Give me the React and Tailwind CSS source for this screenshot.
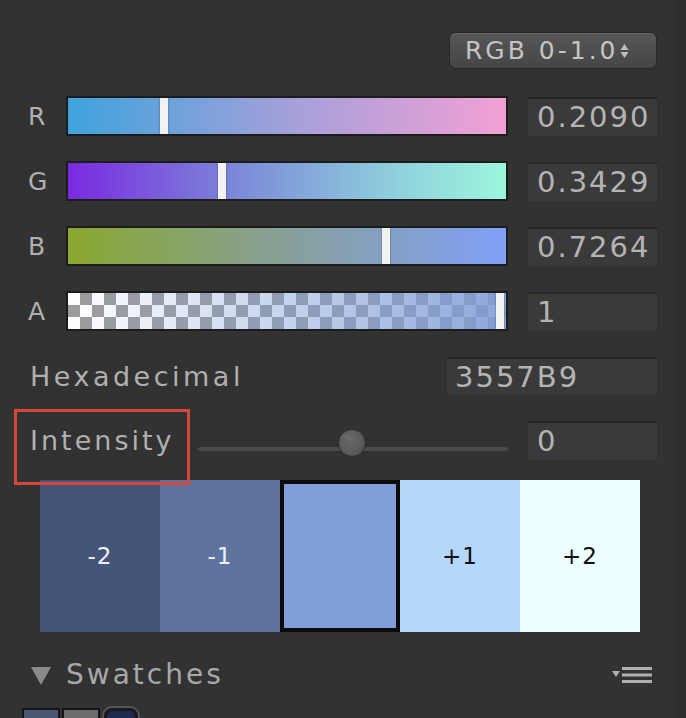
import React from "react";

const font = { fontFamily: '"DejaVu Sans", Verdana, sans-serif' };

function Bar({ gradient, handle, checker }) {
  return (
    <div className="relative w-[442px] h-[40px] border-2 border-[#1c1c1c] overflow-hidden">
      {checker ? (
        <div className="absolute inset-0 bg-[repeating-conic-gradient(#9c9c9c_0_25%,#ffffff_0_50%)] bg-[length:24px_24px]">
          <div className={"absolute inset-0 " + gradient} />
        </div>
      ) : (
        <div className={"absolute inset-0 " + gradient} />
      )}
      <div
        className="absolute top-0 bottom-0 w-[8px] bg-[#f2f2f2] shadow-[0_0_2px_rgba(0,0,0,0.5)]"
        style={{ left: handle }}
      />
    </div>
  );
}

function ValueBox({ children, w = "w-[129px]" }) {
  return (
    <div className={w + " h-[39px] bg-[#3a3a3a] border-t-2 border-[#262626] flex items-center pl-[9px] text-[29px] tracking-[2px] text-[#b4b4b4] leading-none"}>
      {children}
    </div>
  );
}

function ChannelRow({ label, gradient, handle, value, checker, first }) {
  return (
    <div className={"flex items-center h-[40px] " + (first ? "mt-[27px]" : "mt-[25px]")}>
      <div className="w-[38px] text-[25px] text-[#b0b0b0] leading-none">{label}</div>
      <Bar gradient={gradient} handle={handle} checker={checker} />
      <div className="ml-[20px]">
        <ValueBox>{value}</ValueBox>
      </div>
    </div>
  );
}

export default function App() {
  return (
    <div
      className="relative w-[686px] h-[718px] bg-[#323232] overflow-hidden"
      style={font}
    >
      <div className="absolute top-0 bottom-0 right-0 w-[11px] bg-[#2e2e2e]" />
      <div className="relative pl-[28px] pr-[29px] pt-[32px]">
        {/* dropdown */}
        <div className="flex justify-end">
          <div className="w-[208px] h-[37px] rounded-[7px] border border-[#262626] bg-[linear-gradient(#575757,#464646)] shadow-[inset_0_1px_0_rgba(255,255,255,0.12)] flex items-center pl-[15px] pr-[8px]">
            <span className="text-[25px] tracking-[3px] text-[#c4c4c4] leading-none">RGB 0-1.0</span>
            <svg width="9" height="20" viewBox="0 0 9 20" className="ml-[1px]">
              <polygon points="4.5,3 8.5,9 0.5,9" fill="#bdbdbd" />
              <polygon points="0.5,11 8.5,11 4.5,17" fill="#bdbdbd" />
            </svg>
          </div>
        </div>

        <ChannelRow
          first
          label="R"
          gradient="bg-[linear-gradient(to_right,#3ea3dc,#a3a0da_50%,#f2a0d4)]"
          handle="92px"
          value="0.2090"
        />
        <ChannelRow
          label="G"
          gradient="bg-[linear-gradient(to_right,#7a2ae0,#7c8cd8_40%,#8fd0dc_75%,#9cf6dc)]"
          handle="150px"
          value="0.3429"
        />
        <ChannelRow
          label="B"
          gradient="bg-[linear-gradient(to_right,#8aa82e,#88a090_45%,#80a0f8)]"
          handle="314px"
          value="0.7264"
        />
        <ChannelRow
          label="A"
          checker
          gradient="bg-[linear-gradient(to_right,rgba(127,157,214,0),rgba(127,157,214,0.9))]"
          handle="428px"
          value="1"
        />

        {/* Hexadecimal */}
        <div className="flex items-center justify-between h-[38px] mt-[26px]">
          <div className="pl-[2px] text-[27px] tracking-[3.5px] text-[#b0b0b0] leading-none">Hexadecimal</div>
          <div className="w-[210px] h-[38px] bg-[#3a3a3a] border-t-2 border-[#262626] flex items-center pl-[8px] text-[29px] tracking-[2px] text-[#b4b4b4] leading-none">
            3557B9
          </div>
        </div>

        {/* Intensity */}
        <div className="flex items-center h-[38px] mt-[26px]">
          <div className="relative w-[170px] pl-[2px] text-[27px] tracking-[3px] text-[#b0b0b0] leading-none">
            Intensity
            <div className="absolute left-[-14px] top-[-18px] w-[176px] h-[76px] border-[3px] border-[#d4473a] z-10" />
          </div>
          <div className="relative w-[310px] h-[38px]">
            <div className="w-full h-[4px] mt-[26px] rounded-full bg-[#4a4a4a]" />
            <div className="absolute left-[140px] top-[8px] w-[28px] h-[28px] rounded-full bg-[radial-gradient(circle_at_40%_35%,#6a6a6a,#4e4e4e)] border border-[#2c2c2c]" />
          </div>
          <div className="ml-[20px]">
            <ValueBox>0</ValueBox>
          </div>
        </div>

        {/* intensity swatch strip */}
        <div className="ml-[12px] mt-[21px] w-[600px] h-[152px] flex text-[23px] font-medium tracking-[1px] leading-none">
          <div className="w-[120px] shrink-0 bg-[#445578] flex items-center justify-center text-[#eef2ff]">-2</div>
          <div className="w-[120px] shrink-0 bg-[#5f739f] flex items-center justify-center text-[#eef2ff]">-1</div>
          <div className="w-[120px] shrink-0 bg-[#7f9dd6] border-[4px] border-[#0a0a0a]" />
          <div className="w-[120px] shrink-0 bg-[#b5d7fa] flex items-center justify-center text-[#111]">+1</div>
          <div className="w-[120px] shrink-0 bg-[#ecfeff] flex items-center justify-center text-[#111]">+2</div>
        </div>

        {/* Swatches header */}
        <div className="flex items-center h-[30px] mt-[28px]">
          <svg width="22" height="22" viewBox="0 0 22 22" className="ml-[2px]">
            <polygon points="1,3 21,3 11,21" fill="#8a8a8a" />
          </svg>
          <span className="ml-[14px] text-[28px] tracking-[3px] text-[#a8a8a8] leading-none">Swatches</span>
          <div className="ml-auto mr-[5px] flex items-center">
            <svg width="42" height="20" viewBox="0 0 42 20">
              <polygon points="2,6 10,6 6,12" fill="#b0b0b0" />
              <rect x="12" y="2" width="30" height="3" fill="#b0b0b0" />
              <rect x="12" y="8.5" width="30" height="3" fill="#b0b0b0" />
              <rect x="12" y="15" width="30" height="3" fill="#b0b0b0" />
            </svg>
          </div>
        </div>

        {/* bottom swatches */}
        <div className="flex mt-[18px] -ml-[6px] gap-[2px]">
          <div className="w-[38px] h-[38px] border-2 border-[#151515] bg-[#4b5672]" />
          <div className="w-[38px] h-[38px] border-2 border-[#151515] bg-[#6c6c6c]" />
          <div className="ml-[2px] w-[34px] h-[38px] rounded-[8px] border-[3px] border-[#1a1a1a] shadow-[0_0_0_2px_#555] bg-[#1f2a50]" />
        </div>
      </div>
    </div>
  );
}
